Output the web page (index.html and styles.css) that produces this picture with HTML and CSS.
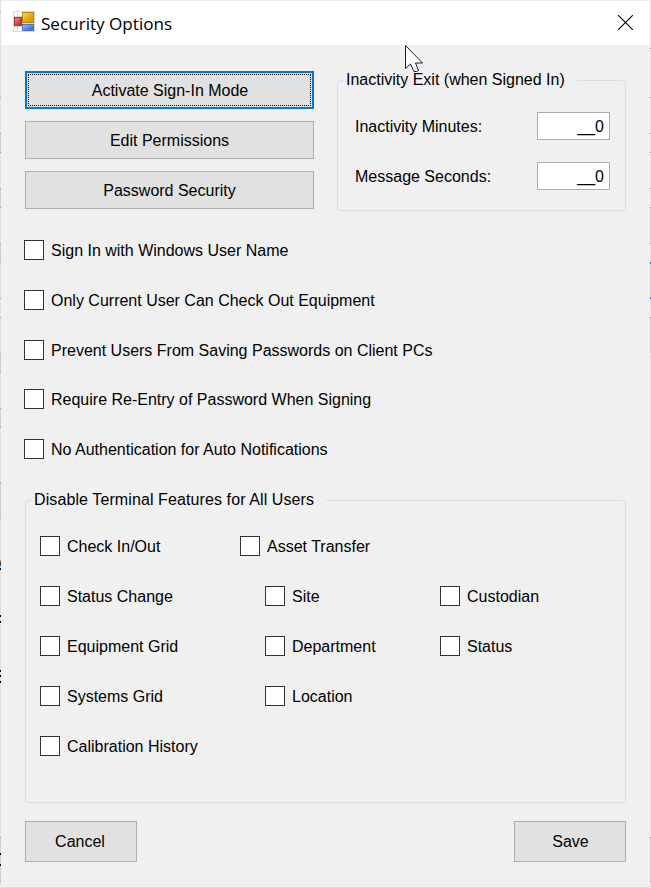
FILE: index.html
```html
<!DOCTYPE html>
<html lang="en">
<head>
    <meta charset="UTF-8">
    <title>Security Options</title>
    <link rel="stylesheet" href="styles.css">
</head>
<body>
    <!-- sliver of the window behind, left side -->
    <svg class="edge" width="1" height="888" shape-rendering="crispEdges">
        <rect width="1" height="888" fill="#e2e2e2"/>
        <path stroke="#cfcfcf" d="M.5 133V152M.5 188V207M.5 243V262M.5 353V372M.5 408V427M.5 482V518M.5 837V881"/>
        <path stroke="#9a9a9a" d="M.5 11v1M.5 97v1M.5 133v1M.5 152v1M.5 188v1M.5 207v1M.5 243v1M.5 262v1M.5 298v1M.5 317v1M.5 353v1M.5 372v1M.5 408v1M.5 427v1M.5 482v1M.5 518v1M.5 837v1M.5 881v1"/>
        <path stroke="#000" d="M.5 568v2M.5 615v2M.5 621v2M.5 670v2M.5 675v2M.5 681v2M.5 853v2M.5 864v2"/>
        <path stroke="#d9822b" d="M.5 560v2"/>
        <path stroke="#1b2f6b" d="M.5 562v3"/>
        <path stroke="#58a6d8" d="M.5 565v2"/>
    </svg>

    <div class="window">
        <div class="title-bar">
            <svg class="app-icon" width="22" height="22" viewBox="0 0 22 22">
                <defs>
                    <linearGradient id="red" x1="0" y1="0" x2="1" y2="1"><stop offset="0" stop-color="#f0938a"/><stop offset="1" stop-color="#b51d1a"/></linearGradient>
                    <linearGradient id="gold" x1="0" y1="0" x2="1" y2="1"><stop offset="0" stop-color="#f8dc78"/><stop offset=".5" stop-color="#e8ac10"/><stop offset="1" stop-color="#d09000"/></linearGradient>
                    <linearGradient id="blue" x1="0" y1="0" x2="1" y2="1"><stop offset="0" stop-color="#9cc0fa"/><stop offset="1" stop-color="#2c5fd0"/></linearGradient>
                </defs>
                <rect width="22" height="21" fill="#d9d9d9"/>
                <path fill="#fff" d="M1 1h3v4H1zM5 1h4v4H5zM1 16h3v4H1zM5 16h4v4H5z"/>
                <rect x="1.5" y="6.5" width="7" height="8" fill="url(#red)" stroke="#b0302a"/>
                <rect x="9.5" y="1.5" width="11" height="10" fill="url(#gold)" stroke="#b98a10"/>
                <rect x="9.5" y="13.5" width="11" height="6" fill="url(#blue)" stroke="#4a74c8"/>
            </svg>
            <h1 class="title">Security Options</h1>
            <svg class="close" width="15" height="15" viewBox="0 0 15 15">
                <path d="M0 0L15 15M15 0L0 15" stroke="#000" stroke-width="1.1"/>
            </svg>
        </div>

        <form class="content">
            <div class="top-row">
                <div class="button-column">
                    <button type="button" class="focused"><span>Activate Sign-In Mode</span></button>
                    <button type="button"><span>Edit Permissions</span></button>
                    <button type="button"><span>Password Security</span></button>
                </div>
                <fieldset class="inactivity">
                    <legend>Inactivity Exit (when Signed In)</legend>
                    <div class="field">
                        <label for="minutes">Inactivity Minutes:</label>
                        <input type="text" id="minutes" value="__0">
                    </div>
                    <div class="field">
                        <label for="seconds">Message Seconds:</label>
                        <input type="text" id="seconds" value="__0">
                    </div>
                </fieldset>
            </div>

            <div class="options">
                <label class="check"><input type="checkbox"><span>Sign In with Windows User Name</span></label>
                <label class="check"><input type="checkbox"><span>Only Current User Can Check Out Equipment</span></label>
                <label class="check"><input type="checkbox"><span>Prevent Users From Saving Passwords on Client PCs</span></label>
                <label class="check tight"><input type="checkbox"><span>Require Re-Entry of Password When Signing</span></label>
                <label class="check"><input type="checkbox"><span>No Authentication for Auto Notifications</span></label>
            </div>

            <fieldset class="features">
                <legend>Disable Terminal Features for All Users</legend>
                <div class="feature-row first">
                    <label class="check"><input type="checkbox"><span>Check In/Out</span></label>
                    <label class="check"><input type="checkbox"><span>Asset Transfer</span></label>
                </div>
                <div class="feature-row">
                    <label class="check"><input type="checkbox"><span>Status Change</span></label>
                    <label class="check"><input type="checkbox"><span>Site</span></label>
                    <label class="check"><input type="checkbox"><span>Custodian</span></label>
                </div>
                <div class="feature-row">
                    <label class="check"><input type="checkbox"><span>Equipment Grid</span></label>
                    <label class="check"><input type="checkbox"><span>Department</span></label>
                    <label class="check"><input type="checkbox"><span>Status</span></label>
                </div>
                <div class="feature-row">
                    <label class="check"><input type="checkbox"><span>Systems Grid</span></label>
                    <label class="check"><input type="checkbox"><span>Location</span></label>
                </div>
                <div class="feature-row">
                    <label class="check"><input type="checkbox"><span>Calibration History</span></label>
                </div>
            </fieldset>

            <div class="actions">
                <button type="button" class="cancel"><span>Cancel</span></button>
                <button type="button" class="save"><span>Save</span></button>
            </div>
        </form>
    </div>

    <!-- right side -->
    <svg class="edge" width="1" height="888" shape-rendering="crispEdges">
        <rect width="1" height="888" fill="#e2e2e2"/>
        <path stroke="#cfcfcf" d="M.5 207V243M.5 262V297M.5 317V353M.5 837V881"/>
        <path stroke="#9a9a9a" d="M.5 48v1M.5 97v1M.5 133v1M.5 152v1M.5 188v1M.5 207v1M.5 243v1M.5 317v1M.5 837v1M.5 881v1"/>
        <path stroke="#1a73c0" d="M.5 262v2M.5 297v2"/>
    </svg>

    <svg class="cursor" width="20" height="30" viewBox="0 0 20 30">
        <path d="M.5 .5V23.5L5.5 19L9 26.5H11.5L13.5 25.5L10.5 18H17.5Z" fill="#fff" stroke="#1b1b2b"/>
    </svg>
</body>
</html>
```

FILE: styles.css
```css
* {
    box-sizing: border-box;
}
body {
    margin: 0;
    width: 651px;
    height: 888px;
    display: grid;
    grid-template-columns: 1px 1fr 1px;
    overflow: hidden;
    font-family: "Liberation Sans", Arial, sans-serif;
    font-size: 16px;
    line-height: 19px;
    color: #000;
}
.edge {
    display: block;
}
.window {
    height: 888px;
    background-color: #f0f0f0;
    border-top: 1px solid #ececec;
    border-bottom: 1px solid #dcdcdc;
}
.title-bar {
    display: flex;
    align-items: center;
    height: 44px;
    padding: 0 17px 0 12px;
    background-color: #fff;
}
.app-icon {
    margin-bottom: 2px;
}
.title {
    flex: 1;
    margin: 0 0 0 6px;
    font-family: "Open Sans", "Noto Sans", sans-serif;
    font-size: 17.1px;
    font-weight: normal;
}
.close {
    margin-bottom: 1px;
}
.content {
    padding: 26px 24px 0;
}
button {
    display: flex;
    align-items: center;
    justify-content: center;
    height: 38px;
    padding: 0;
    background-color: #e1e1e1;
    border: 1px solid #adadad;
    font: inherit;
    color: #000;
}
.focused {
    border: 2px solid #0078d7;
    padding: 1px;
}
.focused span {
    width: 100%;
    height: 100%;
    padding-left: 1px;
    border: 1px dotted #000;
    line-height: 31px;
}
fieldset {
    margin: 0;
    border: 1px solid #d5dfe5;
    border-radius: 4px;
}
legend {
    padding: 0 12px 2px 3px;
    line-height: 17px;
}
.top-row {
    display: flex;
    justify-content: space-between;
}
.button-column {
    display: flex;
    flex-direction: column;
    gap: 12px;
    width: 289px;
}
.inactivity {
    width: 289px;
    height: 140px;
    padding: 22px 15px 0 17px;
}
.inactivity legend {
    margin-left: -12px;
}
.field {
    display: flex;
    align-items: center;
    justify-content: space-between;
    margin-bottom: 22px;
}
.field input {
    width: 73px;
    height: 28px;
    padding: 2px 5px 0 0;
    border: 1px solid #abadb3;
    background-color: #fff;
    font: inherit;
    text-align: right;
}
.options {
    display: flex;
    flex-direction: column;
    gap: 30px;
    margin: 29px 0 0 -1px;
}
.options .tight {
    margin-top: -1px;
}
.check {
    display: flex;
    align-items: center;
    gap: 7px;
    height: 20px;
}
.check input {
    appearance: none;
    flex: none;
    width: 20px;
    height: 20px;
    margin: 0;
    border: 1px solid #333;
    background-color: #fff;
}
.check span {
    padding-top: 1px;
    white-space: nowrap;
}
.features {
    height: 312px;
    margin-top: 32px;
    padding: 26px 14px 0;
}
.features legend {
    margin-left: -9px;
    letter-spacing: 0.1px;
}
.feature-row {
    display: grid;
    grid-template-columns: 225px 175px 1fr;
    margin-bottom: 30px;
}
.feature-row.first {
    grid-template-columns: 200px 1fr;
}
.actions {
    display: flex;
    justify-content: space-between;
    margin-top: 18px;
}
.actions button {
    width: 112px;
    height: 41px;
}
.actions .cancel {
    padding-right: 2px;
}
.actions .save {
    padding-left: 1px;
}
.cursor {
    position: absolute;
    left: 405px;
    top: 45px;
}
```
